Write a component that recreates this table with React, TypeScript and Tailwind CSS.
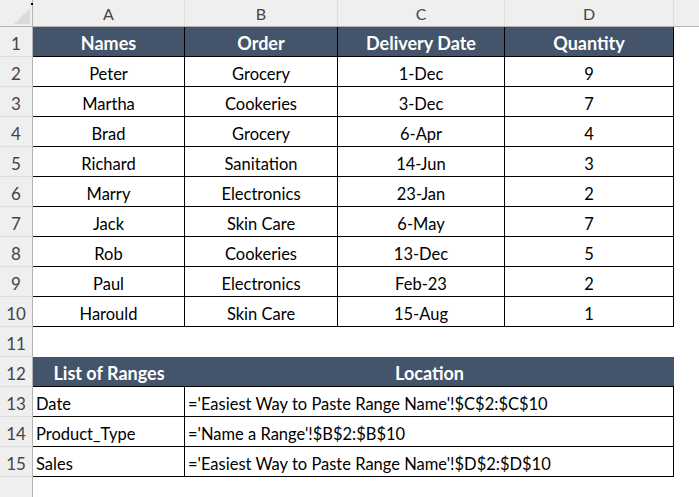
import React from 'react';

const rows = [
  ['Peter', 'Grocery', '1-Dec', '9'],
  ['Martha', 'Cookeries', '3-Dec', '7'],
  ['Brad', 'Grocery', '6-Apr', '4'],
  ['Richard', 'Sanitation', '14-Jun', '3'],
  ['Marry', 'Electronics', '23-Jan', '2'],
  ['Jack', 'Skin Care', '6-May', '7'],
  ['Rob', 'Cookeries', '13-Dec', '5'],
  ['Paul', 'Electronics', 'Feb-23', '2'],
  ['Harould', 'Skin Care', '15-Aug', '1'],
];

const ranges = [
  ['Date', "='Easiest Way to Paste Range Name'!$C$2:$C$10"],
  ['Product_Type', "='Name a Range'!$B$2:$B$10"],
  ['Sales', "='Easiest Way to Paste Range Name'!$D$2:$D$10"],
];

const RowHead = ({ n }: { n: number | string }) => (
  <div className="flex items-center justify-center pt-[4px] bg-[#efefef] border-r border-r-[#b4b4b4] border-b border-b-[#dedede] text-[17px] text-[#444]">
    {n}
  </div>
);

const ColHead = ({ label }: { label: string }) => (
  <div className="flex items-center justify-center pt-[1px] bg-[#efefef] border-r border-r-[#dcdcdc] border-b border-b-[#b4b4b4] text-[16px] text-[#444]">
    {label}
  </div>
);

const Cell = ({ children }: { children: React.ReactNode }) => (
  <div className="flex items-center justify-center pt-[5px] border-r border-b border-black text-[16.5px] text-black">
    {children}
  </div>
);

const HeadCell = ({ children }: { children: React.ReactNode }) => (
  <div className="flex items-center justify-center pt-[4px] bg-[#44546a] border-r border-b border-black text-[18px] font-bold text-white">
    {children}
  </div>
);

export default function App() {
  return (
    <div className="w-[699px] h-[497px] overflow-hidden bg-white font-['Lato',sans-serif]">
      <div className="grid grid-cols-[33px_152px_153px_167px_169px_1fr] grid-rows-[27px_repeat(15,30px)_1fr] h-full">
        {/* column letters */}
        <div className="relative bg-[#efefef] border-r border-r-[#b4b4b4] border-b border-b-[#b4b4b4]">
          <svg className="absolute left-[14px] top-[8px]" width="16" height="16" viewBox="0 0 16 16">
            <polygon points="16,0 16,16 0,16" fill="#dadada" />
          </svg>
          <span className="absolute right-[-1px] top-[3px] w-[2px] h-[2px] bg-black" />
        </div>
        <ColHead label="A" />
        <ColHead label="B" />
        <ColHead label="C" />
        <ColHead label="D" />
        <div className="bg-[#efefef] border-b border-b-[#b4b4b4]" />

        {/* row 1 */}
        <RowHead n={1} />
        <HeadCell>Names</HeadCell>
        <HeadCell>Order</HeadCell>
        <HeadCell>Delivery Date</HeadCell>
        <HeadCell>Quantity</HeadCell>
        <div />

        {rows.map((r, i) => (
          <React.Fragment key={i}>
            <RowHead n={i + 2} />
            {r.map((v, j) => (
              <Cell key={j}>{v}</Cell>
            ))}
            <div />
          </React.Fragment>
        ))}

        {/* row 11 */}
        <RowHead n={11} />
        <div className="col-span-4" />
        <div />

        {/* row 12 */}
        <RowHead n={12} />
        <div className="flex items-center justify-center pt-[4px] bg-[#44546a] border-b border-black text-[18px] font-bold text-white">
          List of Ranges
        </div>
        <div className="col-span-3 flex items-center justify-center pt-[4px] bg-[#44546a] border-b border-black text-[18px] font-bold text-white">
          Location
        </div>
        <div />

        {ranges.map((r, i) => (
          <React.Fragment key={i}>
            <RowHead n={i + 13} />
            <div className="flex items-center pl-[3px] pt-[5px] border-r border-b border-black text-[16.5px] text-black">
              {r[0]}
            </div>
            <div className="col-span-3 flex items-center pl-[3px] pt-[5px] border-r border-b border-black text-[16.5px] text-black">
              {r[1]}
            </div>
            <div />
          </React.Fragment>
        ))}

        {/* row 16 */}
        <div className="bg-[#efefef] border-r border-r-[#b4b4b4]" />
        <div className="col-span-5" />
      </div>
    </div>
  );
}
